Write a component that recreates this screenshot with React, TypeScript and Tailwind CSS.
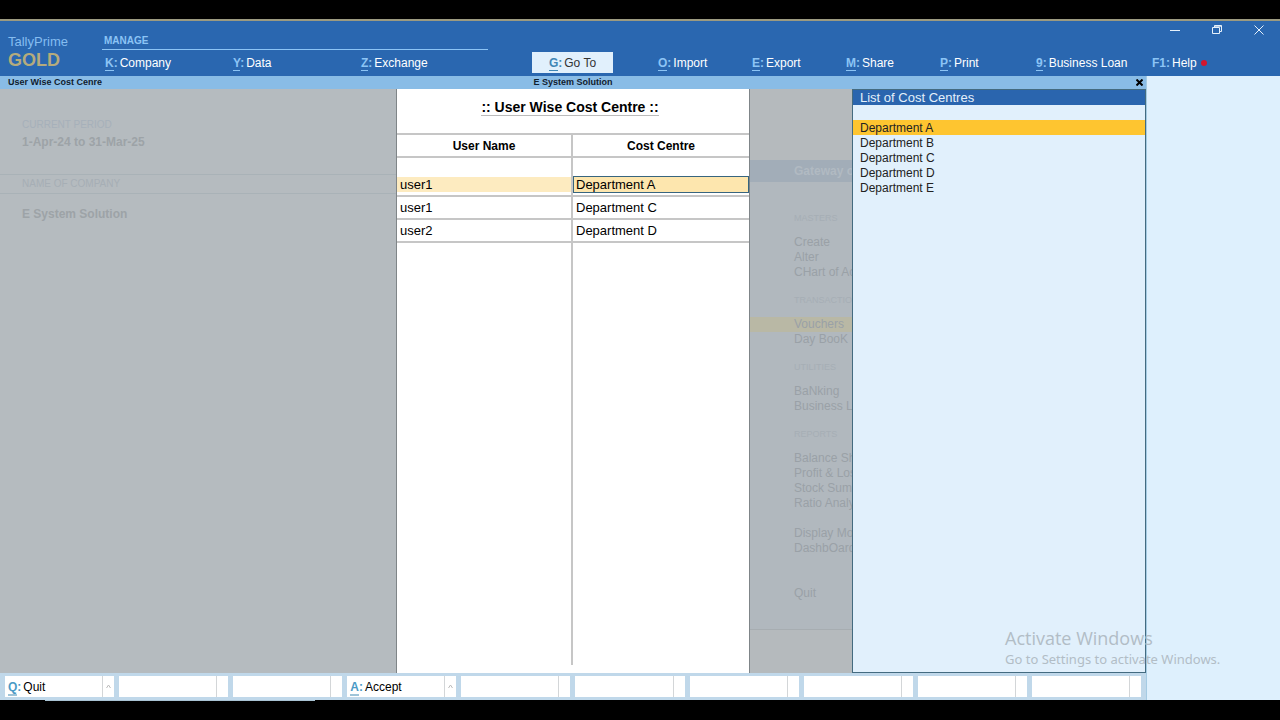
import React from "react";

type Key = { hot: string; label: string };

const manage: Key[] = [
  { hot: "K", label: "Company" },
  { hot: "Y", label: "Data" },
  { hot: "Z", label: "Exchange" },
];

const tools: Key[] = [
  { hot: "O", label: "Import" },
  { hot: "E", label: "Export" },
  { hot: "M", label: "Share" },
  { hot: "P", label: "Print" },
  { hot: "9", label: "Business Loan" },
];

const departments = ["Department A", "Department B", "Department C", "Department D", "Department E"];

const sections = [
  { title: "MASTERS", items: ["Create", "Alter", "CHart of Accounts"] },
  { title: "TRANSACTIONS", items: ["Vouchers", "Day BooK"] },
  { title: "UTILITIES", items: ["BaNking", "Business Loan"] },
  { title: "REPORTS", items: ["Balance Sheet", "Profit & Loss A/c", "Stock Summary", "Ratio Analysis"] },
];

const footer: (Key | null)[] = [
  { hot: "Q", label: "Quit" },
  null,
  null,
  { hot: "A", label: "Accept" },
  null,
  null,
  null,
  null,
  null,
  null,
];

function MenuButton({ hot, label }: Key) {
  return (
    <button type="button" className="flex h-5 items-center gap-0.5 pl-px text-left text-[12px] leading-4 whitespace-nowrap text-white">
      <span className="font-bold text-[#8cc4f5]">
        <span className="border-b border-[#8cc4f5]">{hot}</span>:
      </span>
      {label}
    </button>
  );
}

function Header() {
  const cols = "grid grid-cols-[384fr_169fr_94fr_94fr_94fr_96fr_116fr_129fr]";
  return (
    <header className="flex h-[57px] border-t-2 border-[#9c9a80] bg-[#2a67b0]">
      <div className="flex w-[104px] shrink-0 flex-col pt-[13px] pl-2">
        <span className="text-[13px] leading-4 text-[#85bdf0]">TallyPrime</span>
        <span className="text-[18px] leading-5 font-bold text-[#b5ab7d]">GOLD</span>
      </div>
      <div className="min-w-0 flex-1">
        <div className={`${cols} h-[29px]`}>
          <div className="-ml-0.5 flex items-end border-b border-[#8cc4f5] pb-0.5 pl-0.5 text-[10px] leading-3 font-bold text-[#8cc4f5]">
            MANAGE
          </div>
          <div className="col-span-7 flex items-start justify-end text-[#e6f1fb]">
            <button type="button" aria-label="Minimize" className="flex h-[18px] w-[42px] items-center justify-center">
              <svg width="10" height="10" viewBox="0 0 10 10" stroke="currentColor" fill="none">
                <path d="M0 5.5h10" />
              </svg>
            </button>
            <button type="button" aria-label="Restore" className="flex h-[18px] w-[42px] items-center justify-center">
              <svg width="10" height="10" viewBox="0 0 10 10" stroke="currentColor" fill="none">
                <path d="M.5 2.5h7v6h-7zM2.5 2.5v-2h7v6h-2M2.5 1.200h7" />
              </svg>
            </button>
            <button type="button" aria-label="Close" className="flex h-[18px] w-[42px] items-center justify-center">
              <svg width="10" height="10" viewBox="0 0 10 10" stroke="currentColor" fill="none">
                <path d="M.5.5l9 9M9.500.5l-9 9" />
              </svg>
            </button>
          </div>
        </div>
        <nav className={`${cols} items-center pt-0.5`}>
          <div className="grid grid-cols-3">
            {manage.map((k) => (
              <MenuButton key={k.hot} {...k} />
            ))}
          </div>
          <button
            type="button"
            className="mx-auto flex h-[21px] w-[81px] items-center justify-center gap-0.5 bg-[#e1f0fc] text-[12px] leading-4 text-[#333]"
          >
            <span className="font-bold text-[#3f86b5]">
              <span className="border-b border-[#3f86b5]">G</span>:
            </span>
            Go To
          </button>
          {tools.map((k) => (
            <MenuButton key={k.hot} {...k} />
          ))}
          <button type="button" className="flex h-5 items-center gap-0.5 pl-px text-[12px] leading-4 whitespace-nowrap text-white">
            <span className="font-bold text-[#8cc4f5]">F1:</span>
            Help
            <span className="ml-0.5 size-1.5 rounded-full bg-[#d3152e]" />
          </button>
        </nav>
      </div>
    </header>
  );
}

function PeriodPanel() {
  return (
    <section className="min-w-0 flex-[396] bg-[#b5bbbf] pt-[30px] whitespace-nowrap">
      <div className="pl-[22px]">
        <div className="text-[10px] leading-3 text-[#a6b0ba]">CURRENT PERIOD</div>
        <div className="mt-[3px] text-[12px] leading-4 font-bold text-[#9da3a7]">1-Apr-24 to 31-Mar-25</div>
      </div>
      <div className="mt-6 border-y border-[#a9b2b7] py-[3px] pl-[22px] text-[10px] leading-3 text-[#a6aeb5]">NAME OF COMPANY</div>
      <div className="mt-3 pl-[22px] text-[12px] leading-4 font-bold text-[#9da3a7]">E System Solution</div>
    </section>
  );
}

function CostCentreForm() {
  const line = "border-b-2 border-[#c6c6c6]";
  return (
    <section className="flex w-[354px] shrink-0 flex-col border-x border-[#7f8588] bg-white pb-2 text-black">
      <div className="flex h-11 items-start justify-center pt-2.5 pr-1.5">
        <h1 className="border-b border-[#bbb] text-[14px] leading-4 font-bold">:: User Wise Cost Centre ::</h1>
      </div>
      <div className="flex flex-1">
        <table className="w-full table-fixed border-separate border-spacing-0 border-t-2 border-[#c6c6c6] text-[13px] leading-4">
          <thead>
            <tr className="h-[23px] text-[12px]">
              <th className={`${line} border-r-2 p-0`}>User Name</th>
              <th className={`${line} p-0`}>Cost Centre</th>
            </tr>
          </thead>
          <tbody>
            <tr className="h-[18px]">
              <td className="border-r-2 border-[#c6c6c6] p-0" />
              <td className="p-0" />
            </tr>
            <tr className="h-[21px]">
              <td className={`${line} border-r-2 p-0 align-top`}>
                <div className="mt-px h-[15px] bg-[#fdebc0] pl-[3px] leading-[15px]">user1</div>
              </td>
              <td className={`${line} p-0 align-top`}>
                <input
                  aria-label="Cost Centre"
                  defaultValue="Department A"
                  className="block h-[17px] w-full border border-[#37657f] bg-[#fde6ae] pl-0.5 leading-[15px] outline-none"
                />
              </td>
            </tr>
            <tr className="h-[23px]">
              <td className={`${line} border-r-2 p-0 pl-[3px]`}>user1</td>
              <td className={`${line} p-0 pl-[3px]`}>Department C</td>
            </tr>
            <tr className="h-[23px]">
              <td className={`${line} border-r-2 p-0 pl-[3px]`}>user2</td>
              <td className={`${line} p-0 pl-[3px]`}>Department D</td>
            </tr>
            <tr>
              <td className="border-r-2 border-[#c6c6c6] p-0" />
              <td className="p-0" />
            </tr>
          </tbody>
        </table>
      </div>
    </section>
  );
}

function Gateway() {
  return (
    <section className="min-w-0 flex-[102] overflow-hidden bg-[#b5babd] pt-[71px] text-[12px] leading-[15px] whitespace-nowrap text-[#9aa1a7]">
      <div className="border-b border-[#a7adb1] bg-[#b1b8be] pb-7">
        <h2 className="mb-[29px] h-[22px] bg-[#a2adb8] pl-11 text-[12px] leading-[22px] font-bold text-[#b1bac2]">Gateway of Tally</h2>
        {sections.map((s) => (
          <div key={s.title} className="mb-[13px]">
            <h3 className="mb-[9px] pl-11 text-[9px] leading-[15px] text-[#a6aeb5]">{s.title}</h3>
            {s.items.map((i) => (
              <a key={i} href="#" className={`block pl-11 ${i === "Vouchers" ? "bg-[#b9b8a5]" : ""}`}>
                {i}
              </a>
            ))}
          </div>
        ))}
        <a href="#" className="mt-[15px] block pl-11">Display More Reports</a>
        <a href="#" className="block pl-11">DashbOard</a>
        <a href="#" className="mt-[30px] block pl-11">Quit</a>
      </div>
    </section>
  );
}

function CostCentreList() {
  return (
    <aside className="w-[294px] shrink-0 border border-[#446b80] bg-[#e1f0fc] text-[#222]">
      <h2 className="h-[15px] bg-[#2a65ae] pl-[7px] text-[13px] leading-[15px] text-[#e4f0fb]">List of Cost Centres</h2>
      <ul className="mt-[15px] text-[12px] leading-[14px]">
        {departments.map((d, i) => (
          <li key={d}>
            <button type="button" className={`block w-full pt-px pl-[7px] text-left ${i === 0 ? "bg-[#fec530]" : ""}`}>
              {d}
            </button>
          </li>
        ))}
      </ul>
    </aside>
  );
}

function Footer() {
  return (
    <footer className="grid h-[27px] grid-cols-10 gap-[5px] bg-[#c0d8ea] px-[5px] pt-[3px] pb-[3px]">
      {footer.map((k, i) => (
        <button
          key={i}
          type="button"
          aria-label={k ? undefined : "Unassigned"}
          className="flex min-w-0 items-stretch bg-white text-[12px] leading-4 text-black"
        >
          <span className="flex flex-1 items-center gap-0.5 pl-[3px]">
            {k && (
              <>
                <span className="font-bold text-[#4b9ac6]">
                  <span className="border-b-2 border-[#9fc4d8]">{k.hot}</span>:
                </span>
                {k.label}
              </>
            )}
          </span>
          <span className="flex w-3 items-center justify-center border-l border-[#d3d6d8] text-[#bbb]">
            {k && (
              <svg width="5" height="5" viewBox="0 0 5 5" fill="none" stroke="currentColor">
                <path d="M.5 4l2-3 2 3" />
              </svg>
            )}
          </span>
        </button>
      ))}
    </footer>
  );
}

export default function App() {
  return (
    <div className="flex min-h-screen flex-col bg-black pt-[19px] pb-[19px] font-['Liberation_Sans',Arial,sans-serif]">
      <Header />
      <div className="relative flex flex-1">
        <main className="flex min-w-0 flex-1 flex-col">
          <div className="grid h-[13px] grid-cols-3 items-center bg-[#89bce6] text-[9px] leading-[13px] font-bold text-[#10202e]">
            <span className="pl-2">User Wise Cost Cenre</span>
            <span className="text-center">E System Solution</span>
            <button type="button" aria-label="Close screen" className="mr-[3px] justify-self-end text-black">
              <svg width="7" height="7" viewBox="0 0 7 7" fill="none" stroke="currentColor" strokeWidth="2">
                <path d="M.5.5l6 6M6.500.5l-6 6" />
              </svg>
            </button>
          </div>
          <div className="flex flex-1">
            <PeriodPanel />
            <CostCentreForm />
            <Gateway />
            <CostCentreList />
          </div>
          <Footer />
        </main>
        <aside className="w-[134px] shrink-0 border-l border-[#a5cbe3] bg-[#def0fd]" />
        <div className="pointer-events-none absolute right-[53px] bottom-[31px] w-[222px] font-['Noto_Sans','Open_Sans',sans-serif] whitespace-nowrap text-[#b2bdc6]">
          <div className="font-['Open_Sans'] text-[18px] leading-[22px]">Activate Windows</div>
          <div className="text-[13px] leading-5">Go to Settings to activate Windows.</div>
        </div>
      </div>
      <div className="ml-[45px] h-px w-[270px] bg-[#a9c3d3]" />
    </div>
  );
}
